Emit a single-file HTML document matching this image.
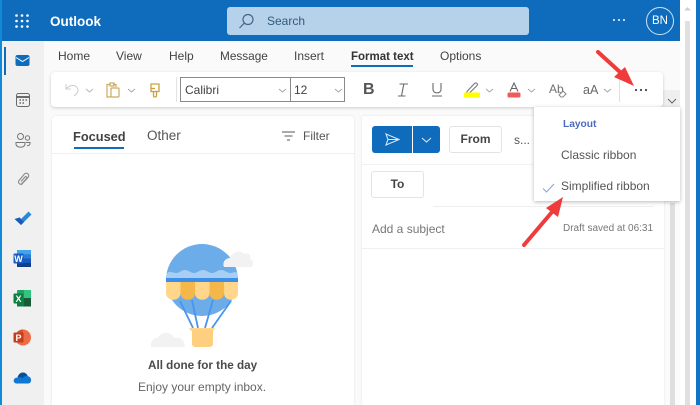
<!DOCTYPE html>
<html><head><meta charset="utf-8">
<style>
*{box-sizing:border-box}
html,body{margin:0;padding:0}
body{width:700px;height:405px;position:relative;overflow:hidden;background:#fff;font-family:"Liberation Sans",sans-serif;color:#424242;filter:blur(.3px)}
.a{position:absolute}
.t{position:absolute;white-space:nowrap;line-height:16px}
svg{position:absolute;overflow:visible}
</style></head><body>
<!-- backgrounds -->
<div class="a" style="left:0;top:0;width:2px;height:405px;background:#0f8bd8"></div>
<div class="a" style="left:2px;top:41px;width:42px;height:364px;background:#f0f0f0"></div>
<div class="a" style="left:44px;top:41px;width:636px;height:364px;background:#fafafa"></div>
<div class="a" style="left:2px;top:0;width:678px;height:41px;background:#0f6cbd"></div>
<!-- right scrollbars and edge -->
<div class="a" style="left:680px;top:0;width:16px;height:405px;background:#fff"></div>
<div class="a" style="left:664px;top:204px;width:16px;height:201px;background:#fbfbfb"></div>
<div class="a" style="left:670px;top:203px;width:5px;height:202px;background:#dedede"></div>
<div class="a" style="left:685px;top:21px;width:5px;height:384px;background:#e0e0e0"></div>
<div class="a" style="left:696px;top:0;width:4px;height:405px;background:#0f74c6"></div>
<svg style="left:683px;top:6px" width="10" height="6"><path d="M1 4.500L4.500 1L8 4.500Z" fill="#cfcfcf"/></svg>
<!-- header -->
<svg style="left:15px;top:14px" width="14" height="14" fill="#fff"><circle cx="1.500" cy="1.500" r="1.300"/><circle cx="7" cy="1.500" r="1.300"/><circle cx="12.500" cy="1.500" r="1.300"/><circle cx="1.500" cy="7" r="1.300"/><circle cx="7" cy="7" r="1.300"/><circle cx="12.500" cy="7" r="1.300"/><circle cx="1.500" cy="12.500" r="1.300"/><circle cx="7" cy="12.500" r="1.300"/><circle cx="12.500" cy="12.500" r="1.300"/></svg>
<div class="t" style="left:50px;top:14px;font-size:13.500px;font-weight:bold;color:#fff;line-height:16px">Outlook</div>
<div class="a" style="left:227px;top:7px;width:302px;height:28px;background:#b5d2ea;border-radius:3px"></div>
<svg style="left:238px;top:13px" width="17" height="17" fill="none" stroke="#44668a" stroke-width="1.200"><circle cx="10" cy="6.500" r="5"/><path d="M6.300 10.200L1.500 15"/></svg>
<div class="t" style="left:267px;top:13px;font-size:12px;color:#35597d">Search</div>
<svg style="left:612px;top:18px" width="14" height="4" fill="#fff"><circle cx="2" cy="2" r="1"/><circle cx="7" cy="2" r="1"/><circle cx="12" cy="2" r="1"/></svg>
<div class="a" style="left:646px;top:7px;width:28px;height:28px;border:1px solid #cfe2f3;border-radius:50%;color:#fff;font-size:11.500px;line-height:26px;text-align:center">BN</div>
<!-- left rail -->
<div class="a" style="left:4px;top:47px;width:1.500px;height:28px;background:#0f6cbd"></div>
<svg style="left:15px;top:54px" width="16" height="13"><rect x="0.500" y="1" width="14" height="11" rx="2" fill="#0f6cbd"/><path d="M1 3.500L7.500 7.500L14 3.500" fill="none" stroke="#fff" stroke-width="1"/></svg>
<svg style="left:16px;top:93px" width="14" height="14" fill="none" stroke="#6b6b6b" stroke-width="1"><rect x="0.500" y="0.500" width="13" height="13" rx="2"/><path d="M1 4h12" stroke-width="2"/><path d="M3.500 7h1.500M6.500 7h1.500M9.500 7h1.500M3.500 10h1.500M6.500 10h1.500" stroke-width="1.400"/></svg>
<svg style="left:15px;top:133px" width="16" height="15" fill="none" stroke="#757575" stroke-width="1"><circle cx="5.500" cy="3.500" r="3"/><circle cx="12.500" cy="5" r="2.200"/><path d="M1 9.500h9v1.500c0 2-2 3.200-4.500 3.200S1 13 1 11zM11 9.500h4v1c0 1.500-1.200 2.200-3 2.200"/></svg>
<svg style="left:17px;top:171px" width="13" height="16" fill="none" stroke="#8a8a8a" stroke-width="1.100"><path d="M4 14L11 6.500C13 4 10 0.500 7.500 3L2 9.500C0.500 11.500 3 14.500 5 12.500L9.500 7.500C10.500 6 9 5 8 6L4 10.500"/></svg>
<svg style="left:14px;top:211px" width="18" height="15"><path d="M7 14L17.500 3.500L14.500 0.500L7 8L5.500 6.500L3 9Z" fill="#2b88d8"/><path d="M7 14L10 11L5.500 6.500L0.500 8Z" fill="#1a5bb5"/></svg>
<svg style="left:13px;top:250px" width="19" height="18"><rect x="4" y="0" width="14" height="17" rx="1" fill="#2b7cd3"/><rect x="4" y="0" width="14" height="4.300" fill="#41a5ee"/><rect x="4" y="8.500" width="14" height="4.300" fill="#185abd"/><rect x="4" y="12.800" width="14" height="4.200" fill="#103f91"/><rect x="0.500" y="3.500" width="10" height="10" rx="1" fill="#1a5bc0"/></svg>
<div class="t" style="left:13.500px;top:250.500px;width:10px;text-align:center;font-size:9px;font-weight:bold;color:#fff">W</div>
<svg style="left:13px;top:290px" width="19" height="17"><rect x="4" y="0" width="14" height="16.500" rx="1" fill="#21a366"/><rect x="11" y="0" width="7" height="8" fill="#33c481"/><rect x="4" y="8" width="7" height="8.500" fill="#107c41"/><rect x="11" y="8" width="7" height="8.500" fill="#185c37"/><rect x="0.500" y="3.500" width="10" height="10" rx="1" fill="#107c41"/></svg>
<div class="t" style="left:13.500px;top:290.500px;width:10px;text-align:center;font-size:9px;font-weight:bold;color:#fff">X</div>
<svg style="left:13px;top:329px" width="19" height="17"><circle cx="10" cy="8.500" r="8" fill="#ed6c47"/><path d="M10 .5A8 8 0 0 0 2 8.500H10Z" fill="#d35230"/><rect x="0.500" y="3.500" width="10" height="10" rx="1" fill="#c43e1c"/></svg>
<div class="t" style="left:13.500px;top:329.500px;width:10px;text-align:center;font-size:9px;font-weight:bold;color:#fff">P</div>
<svg style="left:13px;top:371px" width="19" height="14"><path d="M5 12.500C1.500 13 0 10.500 1 8.500C1.800 7 3 6.500 4.500 6.700C5.500 2.500 9 0.500 12 2C13.500 2.700 14.300 3.800 14.700 5.200C17 5.500 18.500 7.500 18 10C17.600 11.800 16.500 12.500 15 12.500Z" fill="#0f78d4"/><path d="M4.500 6.700C6 5.700 8 6 9.500 7.200C11 5.200 13 4.700 14.700 5.200C14.300 3.800 13.500 2.700 12 2C9 .5 5.500 2.500 4.500 6.700Z" fill="#0a4f9c"/></svg>
<!-- tabs -->
<div class="t" style="left:58px;top:48px;font-size:12px">Home</div>
<div class="t" style="left:116px;top:48px;font-size:12px">View</div>
<div class="t" style="left:169px;top:48px;font-size:12px">Help</div>
<div class="t" style="left:220px;top:48px;font-size:11.800px">Message</div>
<div class="t" style="left:294px;top:48px;font-size:12px">Insert</div>
<div class="t" style="left:351px;top:49px;font-size:11.500px;font-weight:bold;color:#333">Format text</div>
<div class="a" style="left:351px;top:65px;width:62px;height:2px;background:#0f6cbd"></div>
<div class="t" style="left:440px;top:48px;font-size:12px">Options</div>
<!-- toolbar -->
<div class="a" style="left:663px;top:90px;width:17px;height:17px;background:#efefef"></div>
<svg style="left:667px;top:98px" width="10" height="6" fill="none" stroke="#666"><path d="M1 1L5 5L9 1"/></svg>
<div class="a" style="left:51px;top:72px;width:612px;height:35px;background:#fff;border-radius:4px;box-shadow:0 1px 3px rgba(0,0,0,.18)"></div>
<svg style="left:65px;top:82px" width="16" height="15" fill="none" stroke="#d0d0d0" stroke-width="1.100"><path d="M1 2V7H6M1 7C4 3.500 8 2.500 11 4.500C14 7 14 10.500 9 14"/></svg>
<svg style="left:85px;top:88px" width="9" height="5" fill="none" stroke="#b5b5b5"><path d="M1 1L4.500 4L8 1"/></svg>
<svg style="left:106px;top:82px" width="15" height="16" fill="none" stroke="#cfa95c" stroke-width="1.200"><path d="M4 2.500H1V15H5M10 5V2.500H7"/><rect x="4" y="1" width="4" height="3"/><rect x="5" y="6" width="8" height="9" rx="1"/></svg>
<svg style="left:127px;top:88px" width="9" height="5" fill="none" stroke="#a5a5a5"><path d="M1 1L4.500 4L8 1"/></svg>
<svg style="left:150px;top:83px" width="10" height="15" fill="none" stroke="#c9a040" stroke-width="1.300"><path d="M1 1H9V8.500H1ZM1 5.500H5M3.500 8.500V12.500C3.500 14.500 6.500 14.500 6.500 12.500V8.500"/></svg>
<div class="a" style="left:176px;top:77px;width:1px;height:25px;background:#e3e3e3"></div>
<div class="a" style="left:180px;top:77px;width:111px;height:25px;border:1px solid #8a8a8a;background:#fff"></div>
<div class="a" style="left:290px;top:77px;width:55px;height:25px;border:1px solid #8a8a8a;background:#fff"></div>
<div class="t" style="left:185px;top:82px;font-size:12px">Calibri</div>
<div class="t" style="left:294px;top:82px;font-size:12px">12</div>
<svg style="left:278px;top:88px" width="9" height="5" fill="none" stroke="#a5a5a5"><path d="M1 1L4.500 4L8 1"/></svg>
<svg style="left:334px;top:88px" width="9" height="5" fill="none" stroke="#a5a5a5"><path d="M1 1L4.500 4L8 1"/></svg>
<div class="t" style="left:363px;top:82px;font-size:16px;font-weight:bold;color:#555">B</div>
<svg style="left:397px;top:83px" width="12" height="14" fill="none" stroke="#6a6a6a" stroke-width="1.100"><path d="M2.500 1H11M1 13H8.500M6.800 1L4.500 13"/></svg>
<svg style="left:431px;top:82px" width="12" height="15" fill="none" stroke="#6a6a6a" stroke-width="1.100"><path d="M2 1V7.500C2 12 10 12 10 7.500V1M1 14H11"/></svg>
<svg style="left:464px;top:81px" width="17" height="17" fill="none" stroke="#777" stroke-width="1.100"><path d="M3 10.500L10.500 2.500C12 1 14.500 3 13 4.500L5.500 12L2.500 12.500Z"/><rect x="0" y="11.500" width="16" height="5" rx="1" fill="#ffff00" stroke="none"/></svg>
<svg style="left:485px;top:88px" width="9" height="5" fill="none" stroke="#a5a5a5"><path d="M1 1L4.500 4L8 1"/></svg>
<svg style="left:507px;top:82px" width="14" height="16" fill="none" stroke="#666" stroke-width="1.100"><path d="M3 9.500L7 1L11 9.500M4.500 6.500H9.500"/><rect x="0.500" y="10.500" width="13" height="5" rx="1.500" fill="#f05a5a" stroke="none"/></svg>
<svg style="left:527px;top:88px" width="9" height="5" fill="none" stroke="#a5a5a5"><path d="M1 1L4.500 4L8 1"/></svg>
<div class="t" style="left:549px;top:81px;font-size:12px;color:#707070">Ab</div>
<svg style="left:558px;top:90px" width="9" height="8" fill="none" stroke="#888"><path d="M1 5L5 1L8 4L5 7H3Z"/></svg>
<div class="t" style="left:583px;top:82px;font-size:12.500px;color:#666">aA</div>
<svg style="left:603px;top:88px" width="9" height="5" fill="none" stroke="#a5a5a5"><path d="M1 1L4.500 4L8 1"/></svg>
<div class="a" style="left:619px;top:77px;width:1px;height:25px;background:#e0e0e0"></div>
<svg style="left:634px;top:88px" width="14" height="4" fill="#444"><circle cx="2" cy="2" r="1.100"/><circle cx="7" cy="2" r="1.100"/><circle cx="12" cy="2" r="1.100"/></svg>
<!-- list panel -->
<div class="a" style="left:52px;top:116px;width:302px;height:289px;background:#fff;border-radius:4px 4px 0 0;box-shadow:0 0 2px rgba(0,0,0,.1)"></div>
<div class="a" style="left:52px;top:153px;width:302px;height:1px;background:#f0f0f0"></div>
<div class="t" style="left:73px;top:129px;font-size:12.800px;font-weight:bold;color:#424242">Focused</div>
<div class="a" style="left:74px;top:147px;width:50px;height:2px;background:#0f6cbd"></div>
<div class="t" style="left:147px;top:128px;font-size:13.500px;color:#555">Other</div>
<svg style="left:282px;top:131px" width="13" height="10" fill="none" stroke="#555" stroke-width="1.100"><path d="M0 1H13M2.500 5H10.500M5 9H8"/></svg>
<div class="t" style="left:303px;top:128px;font-size:12px;color:#555">Filter</div>
<!-- balloon -->
<svg style="left:130px;top:230px" width="150" height="130" viewBox="0 0 150 130">
<circle cx="72" cy="50" r="36" fill="#6cace9"/>
<path d="M36.500 44C39 40 42 43 46 43C50 43 51 40 55 40C59 40 60 43 64 43C68 43 69 40 73 40C77 40 78 43 82 43C86 43 87 40 91 40C95 40 97 43 100 43C103 43 105 41 107.500 43L108 50H36Z" fill="#a9cef3"/>
<rect x="36" y="48" width="72" height="4" fill="#3c8fe8"/>
<path d="M36 52H50.500V63C50.500 72 36 72 36 63Z" fill="#ffd68a"/>
<path d="M50.500 52H65V63C65 72 50.500 72 50.500 63Z" fill="#f6b74a"/>
<path d="M65 52H79.500V63C79.500 72 65 72 65 63Z" fill="#ffd68a"/>
<path d="M79.500 52H94V63C94 72 79.500 72 79.500 63Z" fill="#f6b74a"/>
<path d="M94 52H108V63C108 72 94 72 94 63Z" fill="#ffd68a"/>
<g stroke="#4a94ec" stroke-width="1.800" fill="none"><path d="M50 71L63 98M62 70L68 98M83 70L75 98M101 71L82 98"/></g>
<path d="M59 98H85L83 101H61Z" fill="#ffd68a"/>
<path d="M62 100H83V114C83 116 81 117 79 117H66C64 117 62 116 62 114Z" fill="#fecf7e"/>
<path d="M94 37C92 33 95 28 100 28C102 22 110 19 114 24C118 22 122 25 120 29C124 30 124 36 121 37Z" fill="#f2f2f2"/>
<path d="M21 117C20 110 25 107 28 108C31 101 41 101 44 108C50 106 55 110 55 117Z" fill="#f2f2f2"/>
</svg>
<div class="t" style="left:148px;top:358px;font-size:11.700px;font-weight:bold;color:#4a4a4a">All done for the day</div>
<div class="t" style="left:138px;top:379px;font-size:12px;color:#666">Enjoy your empty inbox.</div>
<!-- compose -->
<div class="a" style="left:362px;top:116px;width:302px;height:289px;background:#fff;box-shadow:0 0 2px rgba(0,0,0,.1)"></div>
<div class="a" style="left:372px;top:126px;width:40px;height:27px;background:#0f6cbd;border-radius:3px 0 0 3px"></div>
<div class="a" style="left:413px;top:126px;width:27px;height:27px;background:#0f6cbd;border-radius:0 3px 3px 0"></div>
<svg style="left:385px;top:133px" width="15" height="13" fill="none" stroke="#d5e5f5" stroke-width="1.100"><path d="M1 1L14 6.500L1 12L3 6.500ZM3 6.500H14"/></svg>
<svg style="left:421px;top:137px" width="11" height="6" fill="none" stroke="#d5e5f5" stroke-width="1.100"><path d="M1 1L5.500 5L10 1"/></svg>
<div class="a" style="left:449px;top:126px;width:53px;height:27px;border:1px solid #e3e3e3;border-radius:3px;font-size:12px;font-weight:bold;text-align:center;line-height:25px;color:#444">From</div>
<div class="t" style="left:514px;top:132px;font-size:12px;color:#555">s...</div>
<div class="a" style="left:362px;top:164px;width:302px;height:1px;background:#f2f2f2"></div>
<div class="a" style="left:371px;top:171px;width:53px;height:27px;border:1px solid #e3e3e3;border-radius:3px;font-size:12px;font-weight:bold;text-align:center;line-height:25px;color:#444">To</div>
<div class="a" style="left:433px;top:206px;width:221px;height:1px;background:#eee"></div>
<div class="t" style="left:372px;top:221px;font-size:12px;color:#777">Add a subject</div>
<div class="t" style="left:563px;top:221px;font-size:10px;color:#777">Draft saved at 06:31</div>
<div class="a" style="left:362px;top:248px;width:302px;height:1px;background:#f0f0f0"></div>
<!-- dropdown -->
<div class="a" style="left:534px;top:107px;width:146px;height:94px;background:#fff;box-shadow:0 1px 4px rgba(0,0,0,.28)"></div>
<div class="t" style="left:563px;top:117px;font-size:10.200px;font-weight:bold;color:#4a6cc0">Layout</div>
<div class="t" style="left:561px;top:147px;font-size:12px;color:#555">Classic ribbon</div>
<svg style="left:542px;top:183px" width="13" height="10" fill="none" stroke="#8ea4d8" stroke-width="1.100"><path d="M1 5.500L4.500 9L12 1"/></svg>
<div class="t" style="left:561px;top:178px;font-size:12px;color:#555">Simplified ribbon</div>
<!-- arrows -->
<svg style="left:0;top:0" width="700" height="405">
<path d="M598 52L621 73" stroke="#ef3b3b" stroke-width="4" stroke-linecap="round" fill="none"/>
<path d="M634 86L614 77L625 67Z" fill="#ef3b3b"/>
<path d="M524 245L552 212" stroke="#ef3b3b" stroke-width="4" stroke-linecap="round" fill="none"/>
<path d="M563 197L558 217L546 208Z" fill="#ef3b3b"/>
</svg>
</body></html>
